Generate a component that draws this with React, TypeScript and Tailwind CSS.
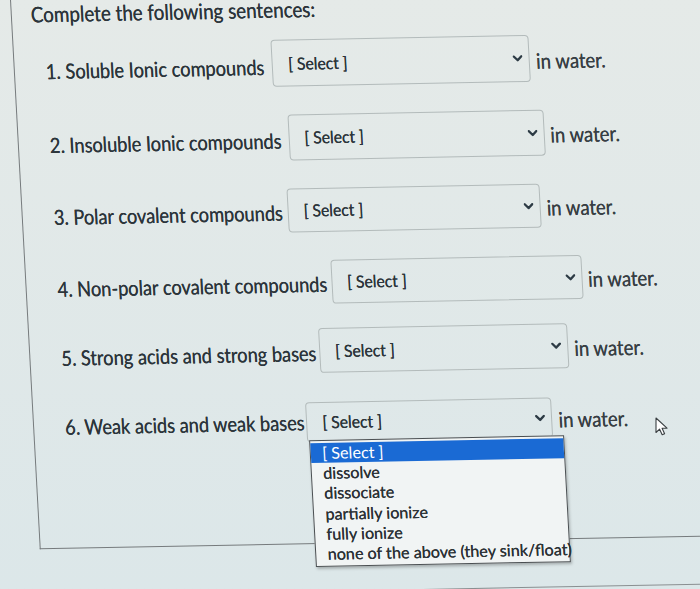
import React from "react";

type Row = {
  label: string;
  rowCls: string;
  boxCls: string;
  open?: boolean;
};

const rows: Row[] = [
  { label: "1. Soluble Ionic compounds", rowCls: "mt-[17px] h-[47px]", boxCls: "ml-[8px] w-[258px]" },
  { label: "2. Insoluble Ionic compounds", rowCls: "mt-[28px] h-[46px]", boxCls: "ml-[7px] w-[256px]" },
  { label: "3. Polar covalent compounds", rowCls: "mt-[28px] h-[44px]", boxCls: "ml-[5px] w-[253px]" },
  { label: "4. Non-polar covalent compounds", rowCls: "mt-[28px] h-[44px]", boxCls: "ml-[4px] w-[251px]" },
  { label: "5. Strong acids and strong bases", rowCls: "mt-[24px] h-[45px]", boxCls: "ml-[3px] w-[249px]" },
  { label: "6. Weak acids and weak bases", rowCls: "mt-[29px] h-[40px]", boxCls: "ml-[2px] w-[246px]", open: true },
];

const options = [
  "[ Select ]",
  "dissolve",
  "dissociate",
  "partially ionize",
  "fully ionize",
  "none of the above (they sink/float)",
];

function Chevron() {
  return (
    <svg width="10" height="7" viewBox="0 0 10 7" className="shrink-0">
      <path d="M1.2 1.3 L5 5.2 L8.8 1.3" fill="none" stroke="#2d3b45" strokeWidth="2.3" strokeLinecap="round" strokeLinejoin="round" />
    </svg>
  );
}

function SelectRow({ row }: { row: Row }) {
  return (
    <div className={`flex items-stretch ${row.rowCls}`}>
      <span className="self-end mb-[8px] inline-block scale-y-[1.15] text-[18.2px] leading-[24px] text-[#2c353b] whitespace-nowrap [text-shadow:0_0_0.5px_#2c353b]">
        {row.label}
      </span>
      <div className={`relative ${row.boxCls}`}>
        <div className="flex h-full items-center justify-between rounded-[4px] border border-[#b3bbbb] pl-[15px] pr-[6px]">
          <span className="inline-block scale-y-[1.08] text-[15.7px] leading-[20px] text-[#2c353b] whitespace-nowrap [text-shadow:0_0_0.5px_#2c353b]">[ Select ]</span>
          <Chevron />
        </div>
        {row.open && (
          <div className="absolute left-[2px] top-[calc(100%-2px)] z-10 w-[255px] border border-[#4a4f52] bg-[#f1f4f4] py-[2px] shadow-[1px_2px_3px_rgba(0,0,0,0.25)]">
            {options.map((o, i) => (
              <div
                key={o}
                className={
                  i === 0
                    ? "bg-[#1a6ad4] pl-[11px] text-[16.2px] leading-[20.2px] text-white whitespace-nowrap"
                    : "pl-[11px] text-[16.2px] leading-[20.2px] text-[#2c3236] whitespace-nowrap [text-shadow:0_0_0.4px_#2c3236]"
                }
              >
                {o}
              </div>
            ))}
          </div>
        )}
      </div>
      <span className="self-center mt-[4px] ml-[6px] inline-block scale-y-[1.15] text-[18.5px] leading-[24px] text-[#383f44] whitespace-nowrap [text-shadow:0_0_0.5px_#383f44]">
        in water.
      </span>
    </div>
  );
}

export default function App() {
  return (
    <div className="relative h-[589px] w-[700px] overflow-hidden bg-linear-to-b from-[#e5eae8] to-[#dce7e9] font-['Lato','Open_Sans',sans-serif]">
      <div className="w-[780px] origin-top-left -rotate-[1.1deg] skew-x-[2deg]">
        <div className="ml-[10px] h-[550px] border-l border-b border-[#767b7d] pl-[19px] pt-[3px]">
          <div className="inline-block scale-y-[1.15] text-[18.8px] leading-[24px] text-[#2c353b] whitespace-nowrap [text-shadow:0_0_0.5px_#2c353b]">
            Complete the following sentences:
          </div>
          <div className="pl-[12px]">
            {rows.map((r) => (
              <SelectRow key={r.label} row={r} />
            ))}
          </div>
        </div>
        <div className="ml-[10px] mt-[47px] border-t border-[#8a8f91]" />
      </div>
      <svg
        className="absolute left-[655px] top-[417px]"
        width="14"
        height="19"
        viewBox="0 0 14 19"
      >
        <path
          d="M1 1 L1 15.5 L4.6 12.2 L7.2 17.8 L9.6 16.7 L7.1 11.2 L12 11.2 Z"
          fill="#ffffff"
          stroke="#3a3f42"
          strokeWidth="1.1"
          strokeLinejoin="round"
        />
      </svg>
    </div>
  );
}
